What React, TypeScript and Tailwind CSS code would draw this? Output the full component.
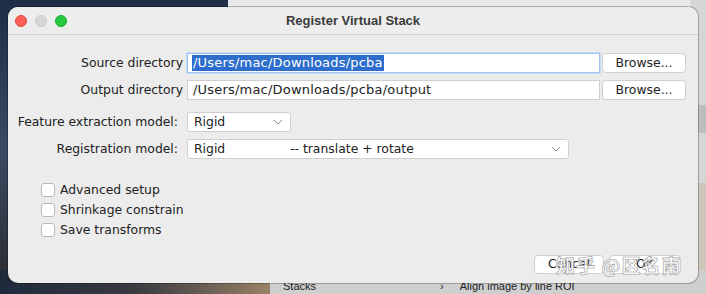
import React from "react";

const ui = { fontFamily: '"DejaVu Sans", "Noto Sans", sans-serif' };

function Chevron() {
  return (
    <svg width="10" height="6" viewBox="0 0 10 6" className="shrink-0">
      <path d="M1 1 L5 5 L9 1" fill="none" stroke="#8a8a8a" strokeWidth="1" />
    </svg>
  );
}

function Check({ label }: { label: string }) {
  return (
    <div className="flex h-[20px] items-center">
      <div className="h-[14px] w-[14px] rounded-[3px] border border-[#b9b9b9] bg-white" />
      <span className="ml-[5px] text-[12.4px] text-[#222]">{label}</span>
    </div>
  );
}

export default function App() {
  return (
    <div className="relative h-[294px] w-[706px] overflow-hidden bg-[#2b3a52]" style={ui}>
      {/* desktop background pieces */}
      <div className="absolute left-0 top-0 h-[294px] w-[706px] bg-gradient-to-b from-[#1f2d47] via-[#3a4a63] to-[#2a2a2e]" />
      <div className="absolute left-[228px] top-0 h-[8px] w-[480px] bg-[#e9e9e9]" />
      <div className="absolute left-[690px] top-0 h-[294px] w-[16px] bg-[#d6d6d6]">
        <div className="mt-[105px] h-[28px] bg-[#bdbdbd]" />
        <div className="mt-[50px] h-[120px] bg-[#cfc6ba]" />
      </div>
      <div className="absolute left-0 top-[270px] h-[24px] w-[270px] bg-gradient-to-r from-[#1d2a3c] via-[#3a3a40] to-[#9a8266]" />
      <div className="absolute left-[270px] top-[270px] flex h-[24px] w-[436px] items-end bg-[#cfcfcf] text-[11px] text-[#222]" style={{ fontFamily: '"Liberation Sans", sans-serif' }}>
        <span className="ml-[13px]">Stacks</span>
        <span className="ml-[124px]">›</span>
        <span className="ml-[16px]">Align image by line ROI</span>
      </div>

      {/* window */}
      <div className="absolute left-[8px] top-[7px] flex h-[276px] w-[690px] flex-col overflow-hidden rounded-[10px] bg-[#ececec] shadow-[0_0_0_1px_rgba(0,0,0,0.25)]">
        {/* title bar */}
        <div className="relative flex h-[28px] shrink-0 items-center border-b border-[#d3d3d3] bg-[#ededed]">
          <div className="ml-[7px] flex gap-[8px]">
            <div className="h-[12px] w-[12px] rounded-full border border-[#e0443e] bg-[#fe5f57]" />
            <div className="h-[12px] w-[12px] rounded-full border border-[#c8c8c8] bg-[#d6d6d6]" />
            <div className="h-[12px] w-[12px] rounded-full border border-[#1aab29] bg-[#28c840]" />
          </div>
          <div className="absolute inset-0 flex items-center justify-center text-[13px] font-bold text-[#3a3a3a]" style={{ fontFamily: '"Liberation Sans", sans-serif' }}>
            Register Virtual Stack
          </div>
        </div>

        {/* content */}
        <div className="flex flex-1 flex-col pt-[18px] text-[12.4px] text-[#222]">
          <div className="flex h-[20px] items-center">
            <div className="w-[175px] text-right">Source directory</div>
            <div className="ml-[4px] flex h-[20px] w-[413px] items-center border border-[#9fc3ec] bg-white pl-[4px] shadow-[0_0_0_1px_#c5dbf5]">
              <span className="bg-[#2d6ecc] px-[1px] text-[13px] leading-[16px] tracking-[0.2px] text-white">/Users/mac/Downloads/pcba</span>
            </div>
            <button className="ml-[2px] flex h-[20px] w-[84px] items-center justify-center rounded-[4px] border border-[#d0d0d0] bg-white text-[12.4px] text-[#222]">Browse...</button>
          </div>
          <div className="mt-[7px] flex h-[20px] items-center">
            <div className="w-[175px] text-right">Output directory</div>
            <div className="ml-[4px] flex h-[20px] w-[413px] items-center border border-[#cfcfcf] bg-white pl-[5px] text-[13px] tracking-[0.2px]">
              /Users/mac/Downloads/pcba/output
            </div>
            <button className="ml-[2px] flex h-[20px] w-[84px] items-center justify-center rounded-[4px] border border-[#d0d0d0] bg-white text-[12.4px] text-[#222]">Browse...</button>
          </div>

          <div className="mt-[12px] flex h-[20px] items-center">
            <div className="w-[170px] text-right">Feature extraction model:</div>
            <div className="ml-[9px] flex h-[20px] w-[104px] items-center justify-between rounded-[3px] border border-[#cfcfcf] bg-white pl-[6px] pr-[7px]">
              <span>Rigid</span>
              <Chevron />
            </div>
          </div>
          <div className="mt-[7px] flex h-[20px] items-center">
            <div className="w-[170px] text-right">Registration model:</div>
            <div className="ml-[9px] flex h-[20px] w-[382px] items-center rounded-[3px] border border-[#cfcfcf] bg-white pl-[6px] pr-[7px]">
              <span className="w-[96px]">Rigid</span>
              <span className="flex-1">-- translate + rotate</span>
              <Chevron />
            </div>
          </div>

          <div className="ml-[33px] mt-[21px] flex flex-col">
            <Check label="Advanced setup" />
            <Check label="Shrinkage constrain" />
            <Check label="Save transforms" />
          </div>

          <div className="mt-auto mb-[9px] flex justify-end gap-[5px] pr-[17px]">
            <button className="flex h-[19px] w-[70px] items-center justify-center rounded-[4px] border border-[#d0d0d0] bg-white text-[12.4px] text-[#222]">Cancel</button>
            <button className="flex h-[19px] w-[72px] items-center justify-center rounded-[4px] border border-[#d0d0d0] bg-white text-[12.4px] text-[#222]">OK</button>
          </div>
        </div>
      </div>

      {/* watermark */}
      <div
        className="absolute left-[556px] top-[251px] text-[19px] font-bold tracking-[1px] text-white/80"
        style={{ fontFamily: '"Noto Sans CJK SC", sans-serif', WebkitTextStroke: "0.6px #9a9a9a" }}
      >
        知乎 @区名南
      </div>
    </div>
  );
}
